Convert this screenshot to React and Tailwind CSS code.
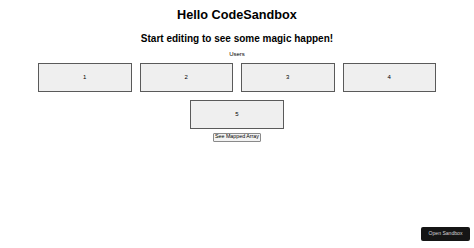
import React from "react";

const users = [1, 2, 3, 4, 5];

export default function App() {
  return (
    <div className="min-h-[248px] w-full bg-white pt-[8px] text-center font-['Liberation_Sans',Arial,sans-serif] text-black">
      <h1 className="text-[12.7px] font-bold leading-[15px]">Hello CodeSandbox</h1>
      <h2 className="mt-[10px] text-[10px] font-bold leading-[12px]">
        Start editing to see some magic happen!
      </h2>
      <div className="mt-[4.5px] text-[6px] leading-[8px]">Users</div>

      {/* user cards */}
      <div className="mt-[5px] flex flex-wrap justify-center gap-[8px]">
        {users.map((u) => (
          <div
            key={u}
            className="flex h-[29px] w-[93.5px] items-center justify-center border-[1.5px] border-[#5a5a5a] bg-[#efefef] text-[6px]"
          >
            {u}
          </div>
        ))}
      </div>

      <button className="mx-auto mt-[4px] block h-[9px] w-[48px] rounded-[1px] border-[0.5px] border-[#8a8a8a] bg-[#f3f3f3] text-[5.3px] leading-none text-black">
        See Mapped Array
      </button>

      <a className="fixed bottom-[7px] right-[4px] flex h-[14px] w-[49px] items-center justify-center rounded-[2px] bg-[#151515] text-[5.1px] text-[#d6d6d6]">
        Open Sandbox
      </a>
    </div>
  );
}
